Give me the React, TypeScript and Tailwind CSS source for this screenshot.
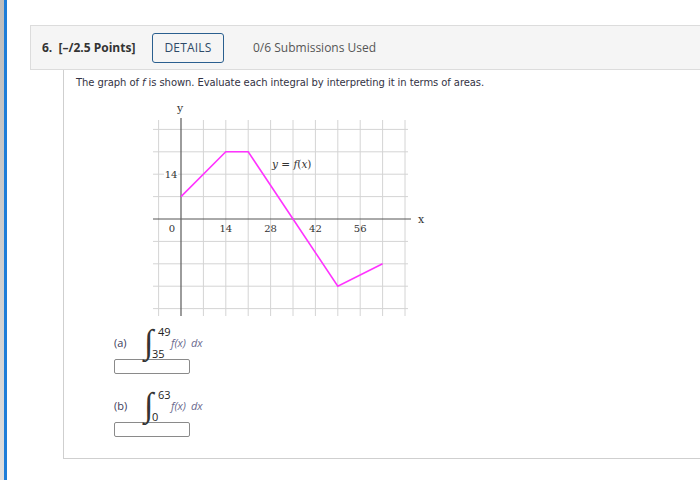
import React from "react";

const X = (u: number) => 36 + u * 3.2;
const Y = (v: number) => 121 - v * 3.2;

function Graph() {
  const vx: number[] = [];
  for (let u = -7; u <= 70; u += 7) vx.push(u);
  const hy: number[] = [];
  for (let v = 28; v >= -28; v -= 7) hy.push(v);
  const pts = [
    [0, 7],
    [14, 21],
    [21, 21],
    [35, 0],
    [49, -21],
    [63, -14],
  ]
    .map(([u, v]) => `${X(u)},${Y(v)}`)
    .join(" ");
  return (
    <svg width="290" height="222" viewBox="0 0 290 222" className="block">
      {vx.map((u) =>
        u === 0 ? null : (
          <line key={"v" + u} x1={X(u)} y1={22} x2={X(u)} y2={218} stroke="#d4d4d4" strokeWidth={1} />
        )
      )}
      {hy.map((v) =>
        v === 0 ? null : (
          <line key={"h" + v} x1={8} y1={Y(v)} x2={263} y2={Y(v)} stroke="#d4d4d4" strokeWidth={1} />
        )
      )}
      <line x1={8} y1={Y(0)} x2={266} y2={Y(0)} stroke="#555" strokeWidth={1} />
      <line x1={X(0)} y1={20} x2={X(0)} y2={218} stroke="#666" strokeWidth={1.3} />
      <polyline points={pts} fill="none" stroke="#ff33ff" strokeWidth={1.6} />
      <g fontFamily="'DejaVu Serif', 'Liberation Serif', serif" fontSize="10" fill="#333">
        <text x={35} y={14} textAnchor="middle" fontSize="11">y</text>
        <text x={276} y={125} textAnchor="middle" fontSize="11">x</text>
        <text x={27} y={134} textAnchor="middle">0</text>
        <text x={X(14)} y={134} textAnchor="middle">14</text>
        <text x={X(28)} y={134} textAnchor="middle">28</text>
        <text x={X(42)} y={134} textAnchor="middle">42</text>
        <text x={X(56)} y={134} textAnchor="middle">56</text>
        <rect x={19} y={70} width={14} height={11} fill="white" />
        <text x={26} y={80} textAnchor="middle">14</text>
        <text x={127} y={70} fontSize="10.5">
          <tspan fontStyle="italic">y</tspan> = <tspan fontStyle="italic">f</tspan>(<tspan fontStyle="italic">x</tspan>)
        </text>
      </g>
    </svg>
  );
}

function Part({ label, upper, lower }: { label: string; upper: string; lower: string }) {
  return (
    <div className="flex flex-col">
      <div className="flex items-center h-[32px] text-[11px] text-[#444]" style={{ fontFamily: "'Open Sans', 'DejaVu Sans', sans-serif" }}>
        <span className="w-[29px] text-[#3b3b5c]">{label}</span>
        <span className="relative w-[28px] h-[32px]">
          <span
            className="absolute left-[1px] top-[-2px] text-[34px] leading-none italic text-[#333]"
            style={{ fontFamily: "'Liberation Serif', 'DejaVu Serif', serif" }}
          >
            ∫
          </span>
          <span className="absolute left-[15px] top-[-1px] text-[11px] leading-[12px] text-[#222]">{upper}</span>
          <span className="absolute left-[9px] top-[21px] text-[11px] leading-[12px] text-[#222]">{lower}</span>
        </span>
        <span className="italic text-[#6a6a8e]">
          f(x)<span className="ml-[5px]">dx</span>
        </span>
      </div>
      <div className="w-[76px] h-[15px] border border-[#8a8a8a] rounded-[2px] bg-white" />
    </div>
  );
}

export default function App() {
  return (
    <div className="w-[700px] h-[480px] bg-white flex overflow-hidden">
      <div className="w-[4px] h-full bg-gradient-to-b from-[#bdbdbd] to-[#dedede]" />
      <div className="w-[3px] h-full bg-[#1e7dd8]" />
      <div className="flex-1 pl-[23px] pt-[25px] flex flex-col">
        <div
          className="h-[45px] border border-r-0 border-[#dcdcdc] bg-[#f5f5f5] flex items-center pl-[11px] pt-[1px] text-[12px]"
          style={{ fontFamily: "'Open Sans', 'Noto Sans', sans-serif" }}
        >
          <span className="font-bold text-[#333] w-[110px]">6.&nbsp; [–/2.5 Points]</span>
          <span className="w-[72px] h-[30px] border border-[#2a5f8f] rounded-[3px] flex items-center justify-center text-[#2e4a68] tracking-[0.2px]">
            DETAILS
          </span>
          <span className="ml-[29px] text-[#555]">0/6 Submissions Used</span>
        </div>
        <div className="ml-[33px] h-[389px] border-l border-b border-[#cfcfcf] flex flex-col">
          <div
            className="pl-[12px] pt-[6px] h-[20px] text-[10px] leading-[14px] tracking-[-0.08px] text-[#333344]"
            style={{ fontFamily: "Verdana, 'DejaVu Sans', sans-serif" }}
          >
            The graph of <span className="italic">f</span> is shown. Evaluate each integral by interpreting it in terms of areas.
          </div>
          <div className="ml-[81px] mt-[8px]">
            <Graph />
          </div>
          <div className="ml-[50px] mt-[7px] flex flex-col gap-[16px]">
            <Part label="(a)" upper="49" lower="35" />
            <Part label="(b)" upper="63" lower="0" />
          </div>
        </div>
      </div>
    </div>
  );
}
